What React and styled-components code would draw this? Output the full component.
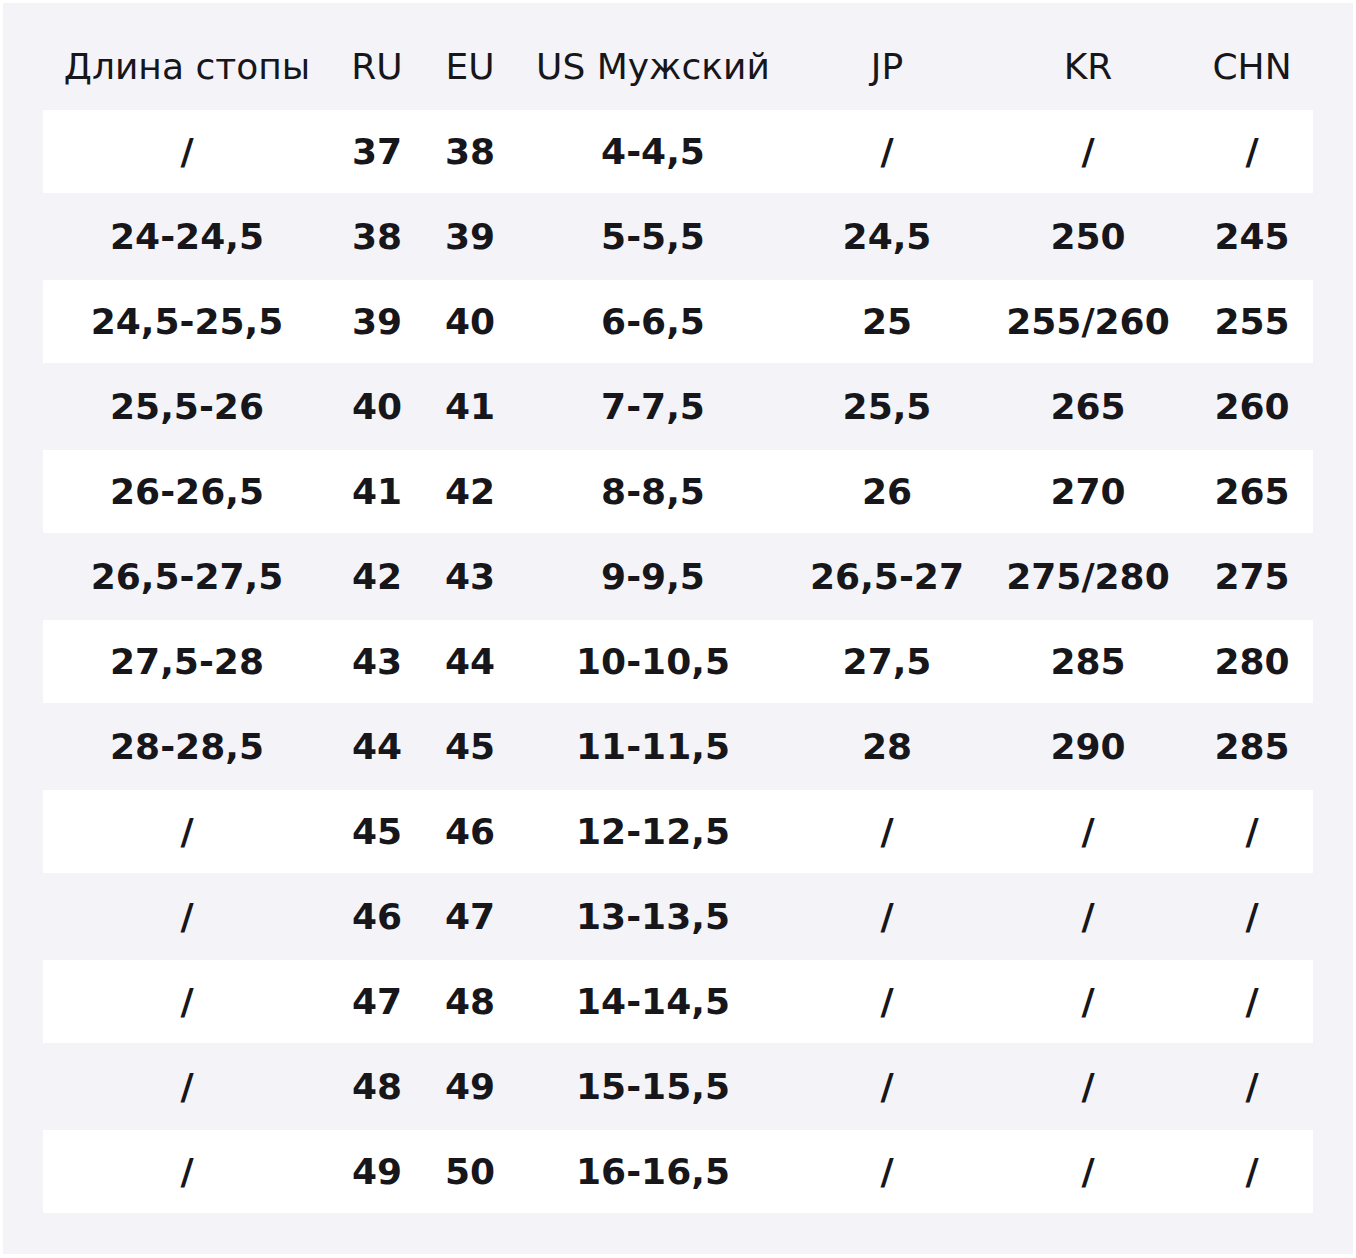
import React from 'react';
import styled, {createGlobalStyle} from "styled-components";

const GlobalStyle = createGlobalStyle`
    html, body {
        margin:0;
        padding:0;
        background:#ffffff;
    }
    body {
        font-family:"DejaVu Sans", "Liberation Sans", sans-serif;
        color:#16161b;
    }
`;

const HEADERS = ["Длина стопы","RU","EU","US Мужский","JP","KR","CHN"];

const ROWS = [
    ["/","37","38","4-4,5","/","/","/"],
    ["24-24,5","38","39","5-5,5","24,5","250","245"],
    ["24,5-25,5","39","40","6-6,5","25","255/260","255"],
    ["25,5-26","40","41","7-7,5","25,5","265","260"],
    ["26-26,5","41","42","8-8,5","26","270","265"],
    ["26,5-27,5","42","43","9-9,5","26,5-27","275/280","275"],
    ["27,5-28","43","44","10-10,5","27,5","285","280"],
    ["28-28,5","44","45","11-11,5","28","290","285"],
    ["/","45","46","12-12,5","/","/","/"],
    ["/","46","47","13-13,5","/","/","/"],
    ["/","47","48","14-14,5","/","/","/"],
    ["/","48","49","15-15,5","/","/","/"],
    ["/","49","50","16-16,5","/","/","/"],
];

const PageWrapper = styled.div`
    padding:3px;
`;

const SizePanel = styled.div`
    background:#f4f4f8;
    padding:22px 40px 41px 40px;
`;

const SizeTable = styled.div`
    display:flex;
    flex-direction:column;
    gap:2px;
`;

const TableRow = styled.div`
    display:grid;
    grid-template-columns:288px 92px 94px 272px 196px 206px 122px;
    align-items:center;
    height:83px;
    background:${props => props.$white ? "#ffffff" : "transparent"};
`;

const HeaderCell = styled.div`
    text-align:center;
    font-size:36px;
    font-weight:400;
    white-space:nowrap;
    line-height:1;
`;

const DataCell = styled.div`
    text-align:center;
    font-size:36px;
    font-weight:700;
    white-space:nowrap;
    line-height:1;
`;

export default function App() {
    return(
        <PageWrapper>
            <GlobalStyle/>
            <SizePanel>
                <SizeTable>
                    <TableRow>
                        {HEADERS.map((h) => (
                            <HeaderCell key={h}>{h}</HeaderCell>
                        ))}
                    </TableRow>
                    {ROWS.map((row, i) => (
                        <TableRow key={i} $white={i % 2 === 0}>
                            {row.map((v, j) => (
                                <DataCell key={j}>{v}</DataCell>
                            ))}
                        </TableRow>
                    ))}
                </SizeTable>
            </SizePanel>
        </PageWrapper>
    )
}
